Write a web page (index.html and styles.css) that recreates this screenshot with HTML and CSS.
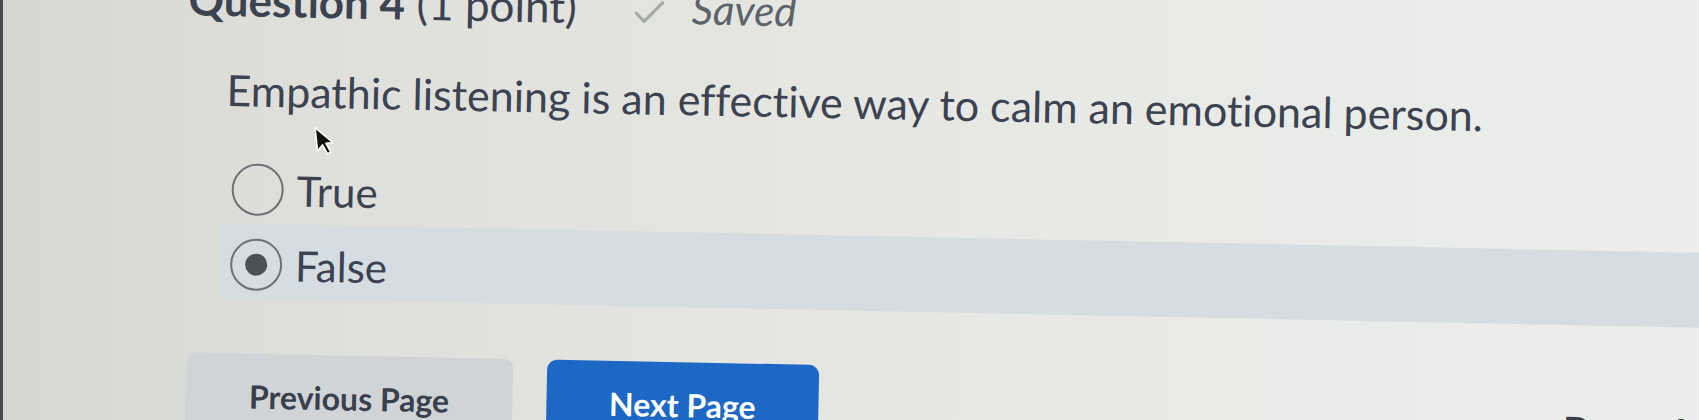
FILE: index.html
```html
<!DOCTYPE html>
<html lang="en">
<head>
<meta charset="utf-8">
<title>Question 4</title>
<link rel="stylesheet" href="styles.css">
</head>
<body>
<div class="screen">
  <div class="page">
    <header class="qhead">
      <h2 class="qtitle"><span class="qnum">Question 4</span> (1 point)</h2>
      <svg class="check" viewBox="0 0 32 26" aria-hidden="true"><polyline points="3,14 11,22 29,3" fill="none" stroke="#a6aaae" stroke-width="3.2" stroke-linecap="round" stroke-linejoin="round"/></svg>
      <span class="saved">Saved</span>
    </header>
    <p class="qtext">Empathic listening is an effective way to calm an emotional person.</p>
    <div class="choices">
      <label class="choice"><span class="radio"></span><span class="clabel">True</span></label>
      <label class="choice selected"><span class="radio checked"></span><span class="clabel">False</span></label>
    </div>
    <nav class="pager">
      <button class="btn prev">Previous Page</button>
      <button class="btn next">Next Page</button>
      <span class="pageinfo">Page 4 of 10</span>
    </nav>
  </div>
  <svg class="cursor" viewBox="0 0 13 21" aria-hidden="true"><path d="M1 1 L1 17 L4.8 13.4 L7.6 19.8 L10 18.8 L7.3 12.5 L12.2 12.5 Z" fill="#111" stroke="#fff" stroke-width="1.1" stroke-linejoin="round"/></svg>
</div>
</body>
</html>
```

FILE: styles.css
```css
html, body {
  margin: 0;
  padding: 0;
  height: 100%;
}

body {
  overflow: hidden;
  font-family: Lato, "Open Sans", "Liberation Sans", sans-serif;
  font-variant-ligatures: none;
  color: #3d4250;
  background: linear-gradient(90deg, #d6d7d3 0%, #dfe0dc 20%, #e6e7e3 50%, #e9ebe8 75%, #eceeeb 100%);
}

.screen {
  position: relative;
  height: 420px;
  overflow: hidden;
  border-left: 3px solid #4a4b4d;
  box-sizing: border-box;
}

.page {
  width: 1800px;
  margin-left: -3px;
  transform: rotate(1.15deg);
  transform-origin: 223px 200px;
}

.qhead {
  display: flex;
  align-items: center;
  height: 52px;
  margin: -27px 0 0 185px;
}

.qtitle {
  margin: 0;
  font-size: 44px;
  line-height: 52px;
  font-weight: 400;
  color: #3d4250;
  white-space: nowrap;
}

.qnum {
  font-weight: 700;
}

.check {
  width: 32px;
  height: 26px;
  margin: 10px 0 0 56px;
}

.saved {
  margin-left: 27px;
  font-size: 42px;
  line-height: 52px;
  font-style: italic;
  color: #5e636a;
}

.qtext {
  margin: 40px 0 0 225px;
  font-size: 43px;
  line-height: 50px;
  white-space: nowrap;
}

.choices {
  margin: 33px 0 0 223px;
}

.choice {
  display: flex;
  align-items: center;
  height: 75px;
  box-sizing: border-box;
  padding: 15px 0 8px 9px;
}

.choice.selected {
  background: #d6dde2;
}

.radio {
  display: flex;
  align-items: center;
  justify-content: center;
  width: 52px;
  height: 52px;
  box-sizing: border-box;
  border: 2px solid #6c7077;
  border-radius: 50%;
  flex-shrink: 0;
}

.radio.checked::after {
  content: "";
  width: 22px;
  height: 22px;
  border-radius: 50%;
  background: #4c5058;
}

.clabel {
  margin-left: 13px;
  font-size: 42px;
  line-height: 52px;
}

.pager {
  display: flex;
  align-items: flex-start;
  gap: 34px;
  margin: 55px 0 0 190px;
}

.btn {
  display: flex;
  align-items: center;
  justify-content: center;
  height: 92px;
  padding: 0 0 6px;
  border: none;
  border-radius: 10px;
  font-family: Lato, "Open Sans", "Liberation Sans", sans-serif;
  font-variant-ligatures: none;
  font-size: 32px;
  line-height: 38px;
  font-weight: 700;
  box-sizing: border-box;
}

.btn.prev {
  width: 328px;
  background: #d1d4d7;
  color: #3a3f4c;
}

.btn.next {
  width: 272px;
  background: #1c68c4;
  color: #ffffff;
}

.pageinfo {
  margin: 26px 0 0 711px;
  font-size: 42px;
  line-height: 50px;
  font-weight: 700;
  color: #3a3f4c;
  white-space: nowrap;
}

.cursor {
  position: absolute;
  left: 312px;
  top: 125px;
  width: 19px;
  height: 31px;
  transform: rotate(-6deg);
}
```
